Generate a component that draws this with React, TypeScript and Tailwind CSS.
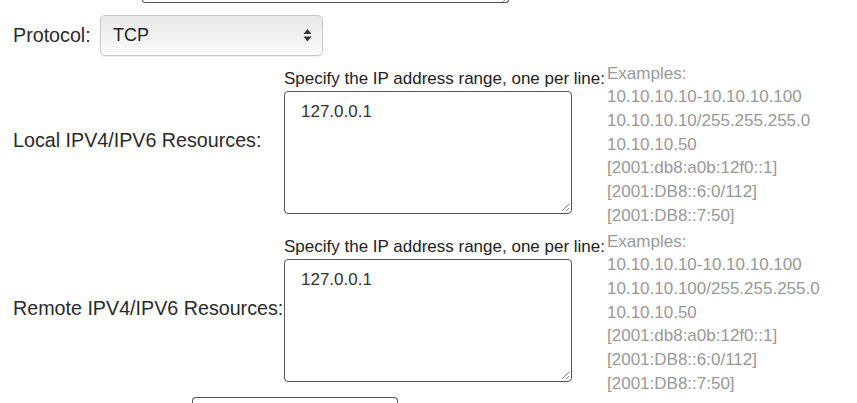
import React from "react";

const examples1 = [
  "10.10.10.10-10.10.10.100",
  "10.10.10.10/255.255.255.0",
  "10.10.10.50",
  "[2001:db8:a0b:12f0::1]",
  "[2001:DB8::6:0/112]",
  "[2001:DB8::7:50]",
];
const examples2 = [
  "10.10.10.10-10.10.10.100",
  "10.10.10.100/255.255.255.0",
  "10.10.10.50",
  "[2001:db8:a0b:12f0::1]",
  "[2001:DB8::6:0/112]",
  "[2001:DB8::7:50]",
];

function Grip() {
  return (
    <svg className="absolute right-[1px] bottom-[1px]" width="9" height="9" viewBox="0 0 9 9">
      <line x1="1" y1="8" x2="8" y2="1" stroke="#8a8a8a" strokeWidth="1" />
      <line x1="5" y1="8" x2="8" y2="5" stroke="#8a8a8a" strokeWidth="1" />
    </svg>
  );
}

function ResourceRow({ label, examples }: { label: string; examples: string[] }) {
  return (
    <div className="flex h-[168px]">
      <div className="w-[271px] h-[157px] flex items-center text-[19.7px] leading-[24px] text-[#2a2a2a] whitespace-nowrap">
        {label}
      </div>
      <div className="w-[322px] flex flex-col">
        <div className="mt-[8px] text-[17px] leading-[20px] text-[#222] whitespace-nowrap">
          Specify the IP address range, one per line:
        </div>
        <div className="relative mt-[2px] w-[288px] h-[123px] border border-[#555] rounded-[4px] bg-white pl-[16px] pt-[8px] text-[17px] leading-[23.8px] text-[#333]">
          127.0.0.1
          <Grip />
        </div>
      </div>
      <div className="ml-[1px] flex flex-col text-[17px] text-[#999]">
        <div className="pt-[1px] leading-[23px]">Examples:</div>
        {examples.map((e) => (
          <div key={e} className="leading-[23.8px] whitespace-nowrap">
            {e}
          </div>
        ))}
      </div>
    </div>
  );
}

export default function App() {
  return (
    <div
      className="w-[857px] h-[403px] overflow-hidden bg-white"
      style={{ fontFamily: '"Liberation Sans", Arial, sans-serif' }}
    >
      <div className="relative ml-[142px] w-[367px] h-[3px] border-x border-b border-[#555] rounded-b-[4px]">
        <svg className="absolute right-[1px] bottom-0" width="6" height="3" viewBox="0 0 6 3">
          <line x1="2" y1="3" x2="5" y2="0" stroke="#8a8a8a" strokeWidth="1" />
        </svg>
      </div>
      <div className="flex items-center mt-[12px] pl-[13px] h-[41px]">
        <div className="text-[19.7px] text-[#2a2a2a] w-[87px]">Protocol:</div>
        <div className="relative w-[223px] h-[41px] rounded-[5px] border border-[#c8c8c8] bg-gradient-to-b from-[#e9e9e9] to-[#fbfbfb] shadow-[0_1px_1px_rgba(0,0,0,0.08)] flex items-center pl-[12px] text-[18px] text-[#222]">
          TCP
          <svg className="absolute right-[10px] top-[13px]" width="9" height="13" viewBox="0 0 9 13">
            <polygon points="4.5,0 8.5,5 0.5,5" fill="#333" />
            <polygon points="0.5,7.5 8.5,7.5 4.5,12.5" fill="#333" />
          </svg>
        </div>
      </div>
      <div className="mt-[5px] pl-[13px]">
        <ResourceRow label="Local IPV4/IPV6 Resources:" examples={examples1} />
        <ResourceRow label="Remote IPV4/IPV6 Resources:" examples={examples2} />
      </div>
      <div className="ml-[192px] w-[206px] h-[12px] border-x border-t border-[#555] rounded-t-[4px]" />
    </div>
  );
}
